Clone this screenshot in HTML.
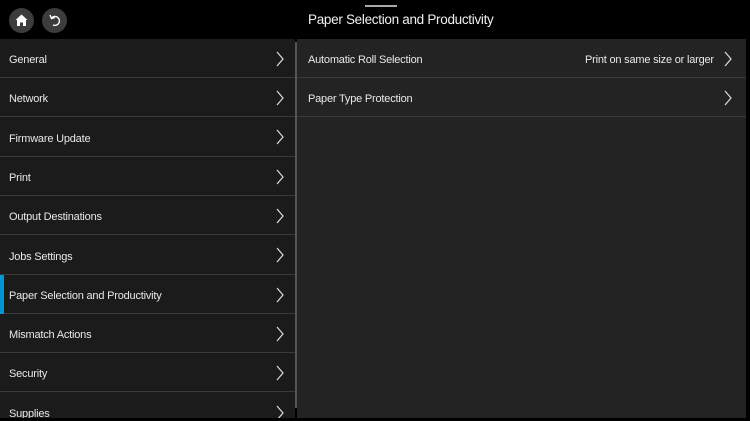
<!DOCTYPE html>
<html><head><meta charset="utf-8"><style>
*{margin:0;padding:0;box-sizing:border-box}
body{width:750px;height:421px;background:#000;font-family:"Liberation Sans",sans-serif;color:#e8e8e8;position:relative;overflow:hidden}
.hdr{position:absolute;left:0;top:0;width:750px;height:38px;background:#000}
.btn{position:absolute;top:8px;width:25px;height:25px;border-radius:50%;background:#3c3c3c}
.title{position:absolute;left:308px;top:12px;font-size:13.5px;letter-spacing:-0.3px;color:#f0f0f0}
.grab{position:absolute;left:365px;top:5px;width:32px;height:2px;background:#aaa}
.left{position:absolute;left:0;top:39px;width:295px;height:379px;background:#1b1b1b;overflow:hidden}
.row{position:absolute;left:0;width:295px;height:39px;border-bottom:1.5px solid #3a3a3a;font-size:11px;letter-spacing:-0.2px}
.row span{position:absolute;left:9px;top:15px}
.bar{position:absolute;left:0;top:0;width:4px;height:39px;background:#0096d6}
.scroll{position:absolute;left:295px;top:42px;width:2px;height:366px;background:#555}
.right{position:absolute;left:297px;top:39px;width:449px;height:379px;background:#232323}
.rrow{position:absolute;left:0;width:449px;height:39px;border-bottom:1.5px solid #3a3a3a;font-size:11px;letter-spacing:-0.2px}
.rrow span{position:absolute;left:11px;top:15px}
</style></head><body>
<div class="hdr">
<div class="btn" style="left:9px"><svg width="25" height="25" viewBox="0 0 25 25"><path d="M12.5 6.5 L18.5 12 L17 12 L17 18 L14 18 L14 14.5 L11 14.5 L11 18 L8 18 L8 12 L6.5 12 Z" fill="#fff"/></svg></div>
<div class="btn" style="left:42px"><svg width="25" height="25" viewBox="0 0 25 25"><path d="M9.5 10 A4.5 4.5 0 1 1 11 17" stroke="#fff" stroke-width="1.4" fill="none"/><path d="M8 7 L9.5 10.5 L13 9.5" stroke="#fff" stroke-width="1.4" fill="none"/></svg></div>
<div class="grab"></div>
<div class="title">Paper Selection and Productivity</div>
</div>
<div class="left">
<div class="row" style="top:0"><span>General</span></div>
<div class="row" style="top:39.3px"><span>Network</span></div>
<div class="row" style="top:78.6px"><span>Firmware Update</span></div>
<div class="row" style="top:117.9px"><span>Print</span></div>
<div class="row" style="top:157.2px"><span>Output Destinations</span></div>
<div class="row" style="top:196.5px"><span>Jobs Settings</span></div>
<div class="row" style="top:235.8px"><div class="bar"></div><span>Paper Selection and Productivity</span></div>
<div class="row" style="top:275.1px"><span>Mismatch Actions</span></div>
<div class="row" style="top:314.4px"><span>Security</span></div>
<div class="row" style="top:353.7px"><span>Supplies</span></div>
<svg style="position:absolute;left:0;top:0" width="295" height="379">
<g stroke="#ddd" stroke-width="1.2" fill="none">
<path d="M277 13 L283 20 L277 27"/><path d="M277 52 L283 59 L277 66"/><path d="M277 91 L283 98 L277 105"/><path d="M277 131 L283 138 L277 145"/><path d="M277 170 L283 177 L277 184"/><path d="M277 209 L283 216 L277 223"/><path d="M277 249 L283 256 L277 263"/><path d="M277 288 L283 295 L277 302"/><path d="M277 327 L283 334 L277 341"/><path d="M277 367 L283 374 L277 381"/>
</g></svg>
</div>
<div class="scroll"></div>
<div class="right">
<div class="rrow" style="top:0"><span>Automatic Roll Selection</span><span style="left:288px">Print on same size or larger</span></div>
<div class="rrow" style="top:39.3px"><span>Paper Type Protection</span></div>
<svg style="position:absolute;left:0;top:0" width="449" height="100"><g stroke="#ddd" stroke-width="1.2" fill="none"><path d="M428 13 L434 20 L428 27"/><path d="M428 52 L434 59 L428 66"/></g></svg>
</div>
</body></html>
